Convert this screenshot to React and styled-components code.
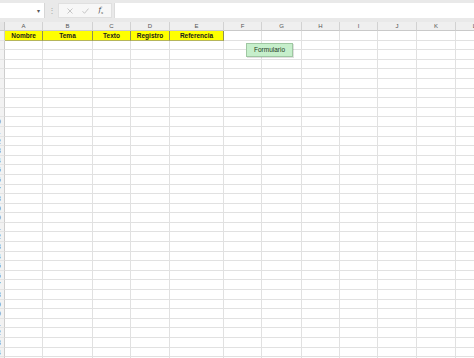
import React from 'react';
import styled, { createGlobalStyle } from 'styled-components';

const Global = createGlobalStyle`
  html, body { margin: 0; padding: 0; background: #fff; overflow: hidden; }
  #root { width: 474px; height: 358px; }
  * { box-sizing: border-box; }
`;

const COLS = [
  { k: 'A', w: 38 }, { k: 'B', w: 50 }, { k: 'C', w: 38 }, { k: 'D', w: 39 },
  { k: 'E', w: 54 }, { k: 'F', w: 38 }, { k: 'G', w: 40 }, { k: 'H', w: 38 },
  { k: 'I', w: 38 }, { k: 'J', w: 39 }, { k: 'K', w: 39 }, { k: 'L', w: 38 },
];

const HEADERS = ['Nombre', 'Tema', 'Texto', 'Registro', 'Referencia'];
const ROW_COUNT = 35;

const Screen = styled.div`
  position: relative;
  width: 474px;
  height: 358px;
  overflow: hidden;
  display: flex;
  flex-direction: column;
  background: #fff;
  font-family: "Liberation Sans", Arial, sans-serif;
`;

const FormulaBar = styled.div`
  flex: none;
  height: 22px;
  display: flex;
  align-items: stretch;
  padding: 3px 0 4px 0;
  background: #e9e9e9;
  gap: 0;
`;

const NameBox = styled.div`
  width: 45px;
  background: #fff;
  border-right: 1px solid #d6d6d6;
  display: flex;
  align-items: center;
  justify-content: flex-end;
  padding-right: 4px;
  color: #555;
  font-size: 6px;
`;

const Dots = styled.div`
  width: 13px;
  display: flex;
  align-items: center;
  justify-content: center;
  color: #a8a8a8;
  font-size: 8px;
`;

const IconBox = styled.div`
  width: 54px;
  background: #f7f7f7;
  border: 1px solid #e0e0e0;
  display: flex;
  align-items: center;
  justify-content: space-around;
  padding: 0 3px;
`;

const Fx = styled.span`
  font-family: "DejaVu Serif", "Liberation Serif", serif;
  font-style: italic;
  font-size: 7px;
  color: #444;
  sub { font-size: 4px; }
`;

const FormulaInput = styled.div`
  flex: 1;
  margin-left: 2px;
  background: #fff;
  border-left: 1px solid #dcdcdc;
`;

const Sheet = styled.div`
  flex: 1;
  margin-left: -10px;
  display: grid;
  grid-template-columns: ${(p) => p.$cols};
  grid-template-rows: 9px;
  grid-auto-rows: 9.6px;
  overflow: hidden;
`;

const Corner = styled.div`
  background: #e6e6e6;
  border-right: 1px solid #c9c9c9;
  border-bottom: 1px solid #c9c9c9;
`;

const ColHead = styled.div`
  background: #efefef;
  border-right: 1px solid #d2d2d2;
  border-bottom: 1px solid #c9c9c9;
  color: #555;
  font-size: 6px;
  line-height: 8px;
  text-align: center;
`;

const RowHead = styled.div`
  background: #f2f2f2;
  border-right: 1px solid #cdcdcd;
  border-bottom: 1px solid #e4e4e4;
  color: #444;
  font-size: 6.6px;
  line-height: 9px;
  text-align: center;
  overflow: hidden;
  white-space: nowrap;
`;

const Cell = styled.div`
  background: ${(p) => (p.$title ? '#ffff00' : '#fff')};
  border-right: 1px solid ${(p) => (p.$title ? '#8f8f55' : '#e1e1e1')};
  border-bottom: 1px solid ${(p) => (p.$title ? '#b5b55a' : '#e1e1e1')};
  color: #1a1a1a;
  font-size: 6.5px;
  font-weight: 700;
  line-height: 9px;
  text-align: center;
  overflow: hidden;
  white-space: nowrap;
`;

const FormButton = styled.div`
  position: absolute;
  left: 246px;
  top: 43px;
  width: 47px;
  height: 14px;
  background: #c6efcb;
  border: 1px solid #9fc7a2;
  box-shadow: 1px 1px 0 rgba(0, 0, 0, 0.12);
  color: #233a23;
  font-size: 6.5px;
  line-height: 12px;
  text-align: center;
`;

function CancelIcon() {
  return (
    <svg width="6" height="6" viewBox="0 0 6 6">
      <path d="M0.5 0.5 L5.5 5.5 M5.5 0.5 L0.5 5.5" stroke="#b9b9b9" strokeWidth="0.8" fill="none" />
    </svg>
  );
}

function CheckIcon() {
  return (
    <svg width="7" height="6" viewBox="0 0 7 6">
      <path d="M0.5 3.2 L2.5 5.3 L6.5 0.6" stroke="#b9b9b9" strokeWidth="0.8" fill="none" />
    </svg>
  );
}

export default function App() {
  const cols = `15px ${COLS.map((c) => `${c.w}px`).join(' ')}`;
  const rows = Array.from({ length: ROW_COUNT }, (_, i) => i + 1);
  return (
    <Screen>
      <Global />
      <FormulaBar>
        <NameBox>▾</NameBox>
        <Dots>⋮</Dots>
        <IconBox>
          <CancelIcon />
          <CheckIcon />
          <Fx>f<sub>x</sub></Fx>
        </IconBox>
        <FormulaInput />
      </FormulaBar>
      <Sheet $cols={cols}>
        <Corner />
        {COLS.map((c) => (
          <ColHead key={c.k}>{c.k}</ColHead>
        ))}
        {rows.map((r) => (
          <React.Fragment key={r}>
            <RowHead>{r}</RowHead>
            {COLS.map((c, ci) => {
              const title = r === 1 && ci < HEADERS.length;
              return (
                <Cell key={c.k} $title={title}>
                  {title ? HEADERS[ci] : ''}
                </Cell>
              );
            })}
          </React.Fragment>
        ))}
      </Sheet>
      <FormButton>Formulario</FormButton>
    </Screen>
  );
}
